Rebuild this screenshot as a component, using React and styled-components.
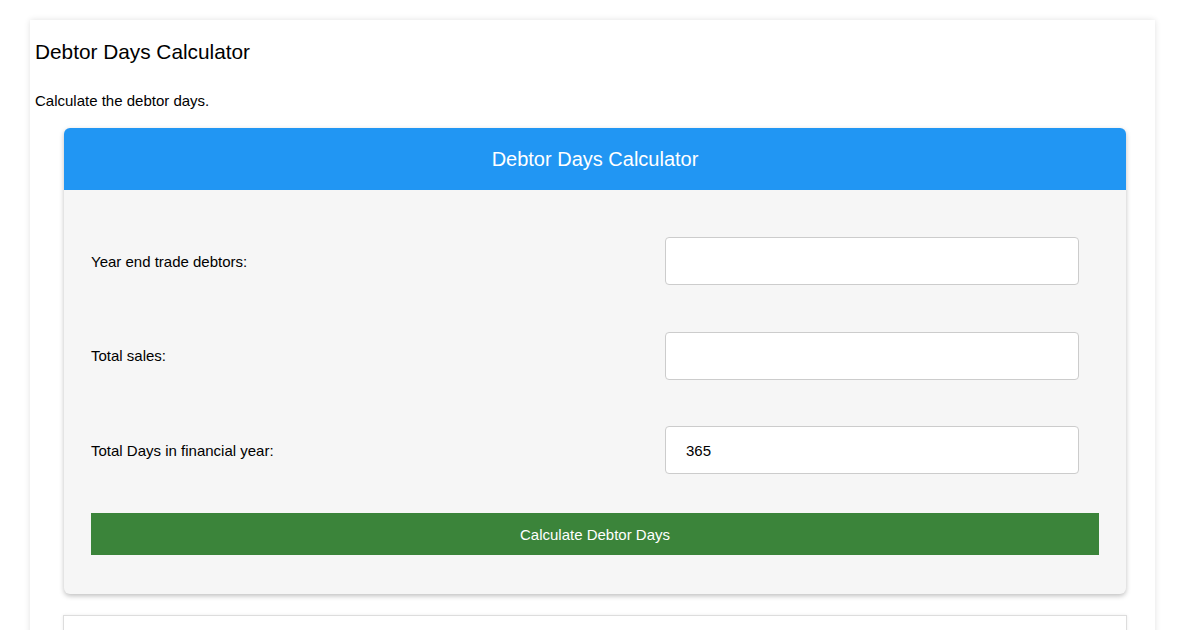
import React from 'react';
import styled, { createGlobalStyle } from 'styled-components';

const GlobalStyle = createGlobalStyle`
  html, body {
    margin: 0;
    background: #fff;
  }
  body {
    /* room the reference page keeps for its vertical scrollbar */
    padding-right: 15px;
    font-family: "Liberation Sans", Arial, sans-serif;
    color: #000;
  }
`;

const fields = [
  { label: 'Year end trade debtors:', value: '' },
  { label: 'Total sales:', value: '' },
  { label: 'Total Days in financial year:', value: '365' },
];

function App() {
  return (
    <>
      <GlobalStyle />
      <Page>
        <Heading>Debtor Days Calculator</Heading>
        <Intro>Calculate the debtor days.</Intro>
        <Card>
          <CardHeader>Debtor Days Calculator</CardHeader>
          <CardBody>
            {fields.map((f) => (
              <FieldRow key={f.label}>
                <Label>{f.label}</Label>
                <Input type='text' defaultValue={f.value} />
              </FieldRow>
            ))}
            <Button type='button'>Calculate Debtor Days</Button>
          </CardBody>
        </Card>
        <ResultCard />
      </Page>
    </>
  );
}

const Page = styled.div`
  width: 1125px;
  margin: 20px auto 0;
  padding: 1px 5px 40px;
  box-sizing: border-box;
  background: #fff;
  box-shadow: 0 0 6px rgba(0, 0, 0, 0.12);
`;

const Heading = styled.h1`
  margin: 19px 0 0;
  font-size: 20.8px;
  font-weight: normal;
  line-height: 24px;
`;

const Intro = styled.p`
  margin: 28px 0 0;
  font-size: 15px;
  line-height: 18px;
`;

const Card = styled.div`
  margin: 18px 24px 0 29px;
  border-radius: 6px;
  overflow: hidden;
  background: #f6f6f6;
  box-shadow: 0 2px 5px rgba(0, 0, 0, 0.25);
`;

const CardHeader = styled.div`
  height: 62px;
  display: flex;
  align-items: center;
  justify-content: center;
  background: #2196f3;
  color: #fff;
  font-size: 20px;
`;

const CardBody = styled.div`
  padding: 47px 27px 39px;
  display: flex;
  flex-direction: column;
`;

const FieldRow = styled.div`
  display: grid;
  grid-template-columns: 574px 414px;
  align-items: center;
  margin-bottom: 46.5px;

  &:nth-of-type(3) {
    margin-bottom: 39px;
  }
`;

const Label = styled.label`
  font-size: 15px;
`;

const Input = styled.input`
  height: 48px;
  box-sizing: border-box;
  padding: 0 20px;
  border: 1px solid #ccc;
  border-radius: 4px;
  background: #fff;
  font-family: "Liberation Sans", Arial, sans-serif;
  font-size: 15px;
  color: #000;
  outline: none;
`;

const Button = styled.button`
  height: 42px;
  border: none;
  background: #3b843a;
  color: #fff;
  font-family: "Liberation Sans", Arial, sans-serif;
  font-size: 15px;
  cursor: pointer;
`;

const ResultCard = styled.div`
  margin: 21px 23px 0 28px;
  height: 120px;
  background: #fff;
  border: 1px solid #ddd;
  box-shadow: 0 0 3px rgba(0, 0, 0, 0.08);
`;

export default App;
